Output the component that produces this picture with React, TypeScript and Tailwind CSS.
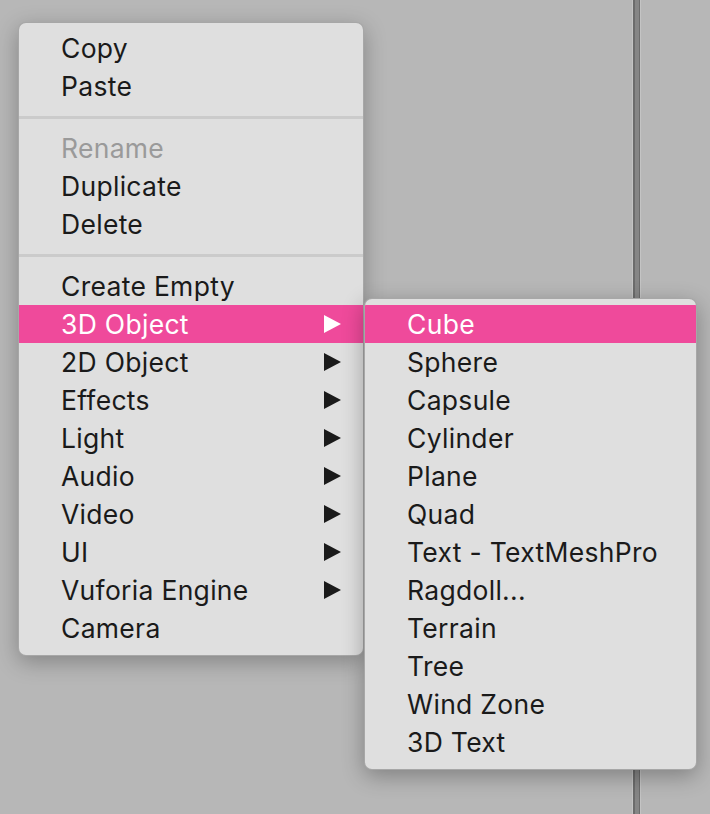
import React from "react";

type Item =
  | { kind: "item"; label: string; disabled?: boolean; sub?: boolean; active?: boolean }
  | { kind: "sep" };

const mainItems: Item[] = [
  { kind: "item", label: "Copy" },
  { kind: "item", label: "Paste" },
  { kind: "sep" },
  { kind: "item", label: "Rename", disabled: true },
  { kind: "item", label: "Duplicate" },
  { kind: "item", label: "Delete" },
  { kind: "sep" },
  { kind: "item", label: "Create Empty" },
  { kind: "item", label: "3D Object", sub: true, active: true },
  { kind: "item", label: "2D Object", sub: true },
  { kind: "item", label: "Effects", sub: true },
  { kind: "item", label: "Light", sub: true },
  { kind: "item", label: "Audio", sub: true },
  { kind: "item", label: "Video", sub: true },
  { kind: "item", label: "UI", sub: true },
  { kind: "item", label: "Vuforia Engine", sub: true },
  { kind: "item", label: "Camera" },
];

const subItems: Item[] = [
  "Cube",
  "Sphere",
  "Capsule",
  "Cylinder",
  "Plane",
  "Quad",
  "Text - TextMeshPro",
  "Ragdoll...",
  "Terrain",
  "Tree",
  "Wind Zone",
  "3D Text",
].map((l, i) => ({ kind: "item" as const, label: l, active: i === 0 }));

function Arrow({ white }: { white?: boolean }) {
  return (
    <svg width="18" height="18" viewBox="0 0 18 18" className="shrink-0">
      <polygon points="1,0 18,9 1,18" fill={white ? "#ffffff" : "#1a1a1a"} />
    </svg>
  );
}

function Menu({ items }: { items: Item[] }) {
  return (
    <div className="flex flex-col pt-[6px] pb-[8px]">
      {items.map((it, i) =>
        it.kind === "sep" ? (
          <div key={i} className="pt-[11px] pb-[10px]">
            <div className="h-[3px] bg-[#cbcbcb]" />
          </div>
        ) : (
          <div
            key={i}
            className={
              "flex h-[38px] items-center justify-between pl-[42px] pr-[22px] " +
              (it.active ? "bg-[#ef4a9b] text-white" : it.disabled ? "text-[#9a9a9a]" : "text-[#1a1a1a]")
            }
          >
            <span className="pt-[1px] tracking-[0.3px]">{it.label}</span>
            {it.sub && <Arrow white={it.active} />}
          </div>
        )
      )}
    </div>
  );
}

export default function App() {
  return (
    <div
      className="relative h-[814px] w-[710px] overflow-hidden bg-[#b7b7b7] text-[26.5px] leading-none"
      style={{ fontFamily: "Inter, 'Liberation Sans', sans-serif" }}
    >
      <div className="flex h-full">
        <div className="w-[632px]" />
        <div className="flex h-full w-[9px]">
          <div className="w-[1px] bg-[#c4c4c4]" />
          <div className="w-[2px] bg-[#6c6c6c]" />
          <div className="w-[4px] bg-[#868686]" />
          <div className="w-[1px] bg-[#6c6c6c]" />
          <div className="w-[1px] bg-[#c4c4c4]" />
        </div>
        <div className="flex-1" />
      </div>

      <div className="absolute left-[18px] top-[22px] w-[346px] overflow-hidden rounded-[8px] border border-black/25 bg-[#dfdfdf] shadow-[0_6px_22px_rgba(0,0,0,0.28)]">
        <Menu items={mainItems} />
      </div>

      <div className="absolute left-[364px] top-[298px] w-[333px] overflow-hidden rounded-[8px] border border-black/25 bg-[#dfdfdf] shadow-[0_6px_22px_rgba(0,0,0,0.3)]">
        <Menu items={subItems} />
      </div>
    </div>
  );
}
